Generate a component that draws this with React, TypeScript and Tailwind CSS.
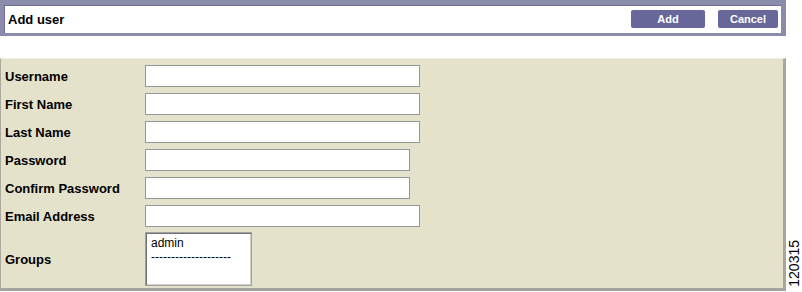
import React from "react";

const fields = [
  { label: "Username", w: "w-[275px]" },
  { label: "First Name", w: "w-[275px]" },
  { label: "Last Name", w: "w-[275px]" },
  { label: "Password", w: "w-[265px]" },
  { label: "Confirm Password", w: "w-[265px]" },
  { label: "Email Address", w: "w-[275px]" },
];

export default function App() {
  return (
    <div className="flex w-[802px] h-[292px] bg-white font-['Liberation_Sans',Arial,sans-serif] text-black">
      <div className="flex flex-col w-[786px]">
        {/* title bar */}
        <header className="h-[36px] border-[#8b8bab] border-t-[5px] border-l-[4px] border-b-[3px] border-r-[5px] bg-white flex items-center justify-between pl-[4px] pr-[3px] shadow-[inset_1px_1px_0_#6e6e94]">
          <h1 className="text-[13px] font-bold leading-none">Add user</h1>
          <div className="flex items-center gap-[13px]">
            <button className="w-[74px] h-[18px] rounded-[2px] bg-[#67679a] text-white text-[11px] font-bold leading-none">
              Add
            </button>
            <button className="w-[60px] h-[18px] rounded-[2px] bg-[#67679a] text-white text-[11px] font-bold leading-none">
              Cancel
            </button>
          </div>
        </header>

        {/* form panel */}
        <div className="mt-[22px] h-[233px] bg-[#e4e2cb] border-t border-t-[#f1efe3] border-l border-l-[#a9a99e] border-r-[3px] border-r-[#a7a79c] border-b-[3px] border-b-[#a4a49a] pt-[6px] pl-[4px]">
          <div className="grid grid-cols-[140px_auto] gap-y-[6px] items-center">
            {fields.map(f => (
              <React.Fragment key={f.label}>
                <label className="text-[13px] font-bold leading-none">{f.label}</label>
                <input
                  type="text"
                  className={`${f.w} h-[22px] bg-white border border-[#8c9aa2] outline-none`}
                  aria-label={f.label}
                />
              </React.Fragment>
            ))}
            <label className="text-[13px] font-bold leading-none">Groups</label>
            <div className="w-[107px] h-[54px] -mt-[1px] bg-white border border-[#a0a0a0] shadow-[inset_1px_1px_0_#707070,inset_-1px_-1px_0_#d4d4d4] pl-[5px] pt-[3px] text-[12px] leading-[14px]">
              <div>admin</div>
              <div>--------------------</div>
            </div>
          </div>
        </div>
      </div>

      <div className="flex-1 flex items-end justify-center pb-[5px]">
        <span className="[writing-mode:vertical-rl] rotate-180 text-[14px] leading-none">120315</span>
      </div>
    </div>
  );
}
